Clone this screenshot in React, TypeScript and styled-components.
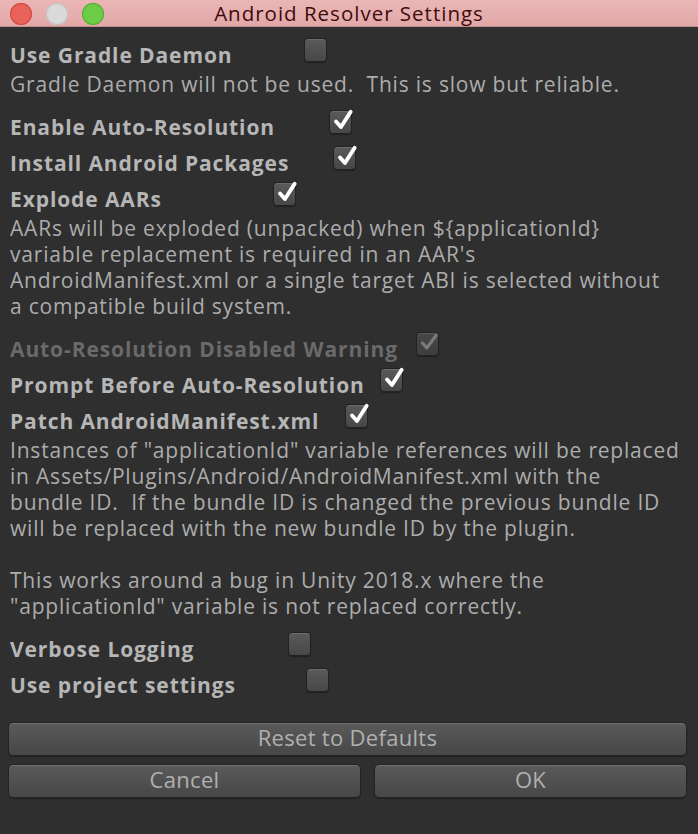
import styled, { createGlobalStyle } from 'styled-components';

interface ToggleProps {
  label: string;
  labelWidth: number;
  checked?: boolean;
  disabled?: boolean;
  description?: string[];
}

const toggles: ToggleProps[] = [
  {
    label: 'Use Gradle Daemon',
    labelWidth: 294,
    description: ['Gradle Daemon will not be used.  This is slow but reliable.'],
  },
  { label: 'Enable Auto-Resolution', labelWidth: 319, checked: true },
  { label: 'Install Android Packages', labelWidth: 323, checked: true },
  {
    label: 'Explode AARs',
    labelWidth: 263,
    checked: true,
    description: [
      'AARs will be exploded (unpacked) when ${applicationId}',
      "variable replacement is required in an AAR's",
      'AndroidManifest.xml or a single target ABI is selected without',
      'a compatible build system.',
    ],
  },
  { label: 'Auto-Resolution Disabled Warning', labelWidth: 406, checked: true, disabled: true },
  { label: 'Prompt Before Auto-Resolution', labelWidth: 370, checked: true },
  {
    label: 'Patch AndroidManifest.xml',
    labelWidth: 335,
    checked: true,
    description: [
      'Instances of "applicationId" variable references will be replaced',
      'in Assets/Plugins/Android/AndroidManifest.xml with the',
      'bundle ID.  If the bundle ID is changed the previous bundle ID',
      'will be replaced with the new bundle ID by the plugin.',
      '',
      'This works around a bug in Unity 2018.x where the',
      '"applicationId" variable is not replaced correctly.',
    ],
  },
  { label: 'Verbose Logging', labelWidth: 278 },
  { label: 'Use project settings', labelWidth: 296 },
];

// the enabled tick pokes out above the box, the greyed one stays inside
const Checkbox = ({ checked, disabled }: { checked?: boolean; disabled?: boolean }) => (
  <Box disabled={disabled}>
    {checked && (
      <Check viewBox="0 0 24 24">
        {disabled ? (
          <path
            d="M6 12 L10 16.5 L18.5 5"
            fill="none"
            stroke="#7a7a7a"
            strokeWidth="3"
            strokeLinecap="round"
            strokeLinejoin="round"
          />
        ) : (
          <path
            d="M6.5 12.5 L11 17.5 L20 3.5"
            fill="none"
            stroke="#ffffff"
            strokeWidth="3.6"
            strokeLinecap="round"
            strokeLinejoin="round"
          />
        )}
      </Check>
    )}
  </Box>
);

const Toggle = ({ label, labelWidth, checked, disabled, description }: ToggleProps) => (
  <>
    <ToggleRow>
      <Label width={labelWidth} disabled={disabled}>
        {label}
      </Label>
      <Checkbox checked={checked} disabled={disabled} />
    </ToggleRow>
    {description && (
      <Description>
        {description.map((line, i) => (
          <Line key={i}>{line}</Line>
        ))}
      </Description>
    )}
  </>
);

const App = (): JSX.Element => (
  <>
    <GlobalStyle />
    <Window>
      <TitleBar>
        <Lights>
          <Light color="#e8625a" ring="#cf4a43" />
          <Light color="#dadada" ring="#c2c2c2" />
          <Light color="#6dcc46" ring="#55ad33" />
        </Lights>
        <Title>Android Resolver Settings</Title>
        <span />
      </TitleBar>

      <Content>
        {toggles.map((t) => (
          <Toggle key={t.label} {...t} />
        ))}

        <Buttons>
          <Button>Reset to Defaults</Button>
          <ButtonRow>
            <Button>Cancel</Button>
            <Button>OK</Button>
          </ButtonRow>
        </Buttons>
      </Content>
    </Window>
  </>
);

const GlobalStyle = createGlobalStyle`
  body {
    margin: 0;
    background: #2f2f2f;
    font-family: "Open Sans", "Liberation Sans", sans-serif;
  }
`;
const Window = styled.div`
  width: 698px;
  height: 834px;
  background: #2f2f2f;
  display: flex;
  flex-direction: column;
  overflow: hidden;
`;
const TitleBar = styled.div`
  height: 27px;
  display: grid;
  grid-template-columns: 1fr auto 1fr;
  align-items: center;
  background: linear-gradient(#ebb6b6, #e2a8a8);
  border-bottom: 1px solid #c48d8d;
  box-sizing: border-box;
`;
const Lights = styled.div`
  display: flex;
  gap: 14px;
  padding-left: 10px;
`;
const Light = styled.div<{ color: string; ring: string }>`
  width: 22px;
  height: 22px;
  border-radius: 50%;
  background: ${({ color }) => color};
  box-shadow: inset 0 0 0 1px ${({ ring }) => ring};
`;
const Title = styled.div`
  font-size: 20.5px;
  letter-spacing: 1px;
  color: #3d0c0c;
  line-height: 27px;
`;
const Content = styled.div`
  padding: 11px 11px 0 10px;
  display: flex;
  flex-direction: column;
`;
const ToggleRow = styled.div`
  display: flex;
  align-items: flex-start;
  height: 36px;
`;
const Label = styled.div<{ width: number; disabled?: boolean }>`
  width: ${({ width }) => width}px;
  flex: none;
  font-size: 21px;
  font-weight: 700;
  letter-spacing: 0.9px;
  line-height: 36px;
  margin-top: -1px;
  color: ${({ disabled }) => (disabled ? '#6a6a6a' : '#b6b6b6')};
  white-space: nowrap;
`;
const Box = styled.div<{ disabled?: boolean }>`
  position: relative;
  width: 23px;
  height: 24px;
  box-sizing: border-box;
  border-radius: 4px;
  border: 1px solid #222;
  background: ${({ disabled }) =>
    disabled ? 'linear-gradient(#474747, #3e3e3e)' : 'linear-gradient(#5a5a5a, #474747)'};
  box-shadow: inset 0 1px 0 rgba(255, 255, 255, 0.12), 0 1px 1px rgba(0, 0, 0, 0.35);
`;
const Check = styled.svg`
  position: absolute;
  left: -1px;
  top: -3px;
  width: 26px;
  height: 26px;
  overflow: visible;
`;
const Description = styled.div`
  margin: -3px 0 13px;
  font-size: 21px;
  letter-spacing: 0.8px;
  line-height: 26px;
  color: #acacac;
`;
const Line = styled.div`
  min-height: 26px;
  white-space: pre;
`;
const Buttons = styled.div`
  margin: 18px 0 0 -2px;
  display: flex;
  flex-direction: column;
  gap: 8px;
`;
const ButtonRow = styled.div`
  display: grid;
  grid-template-columns: 353px 1fr;
  gap: 13px;
`;
const Button = styled.button`
  height: 34px;
  width: 100%;
  padding: 0 0 3px;
  border-radius: 5px;
  border: 1px solid #232323;
  background: linear-gradient(#5a5a5a, #474747);
  box-shadow: inset 0 1px 0 rgba(255, 255, 255, 0.14), 0 1px 1px rgba(0, 0, 0, 0.3);
  color: #b0b0b0;
  font-family: "Open Sans", "Liberation Sans", sans-serif;
  font-size: 22px;
  line-height: 29px;
  letter-spacing: 0.3px;
`;

export default App;
